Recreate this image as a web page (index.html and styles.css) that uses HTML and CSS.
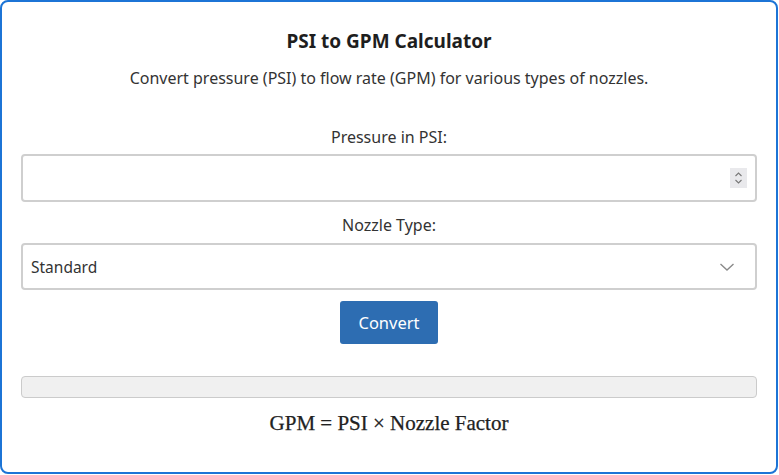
FILE: index.html
```html
<!DOCTYPE html>
<html>
<head>
<meta charset="utf-8">
<link rel="stylesheet" href="styles.css">
</head>
<body>
<div class="card">
  <h1 class="title">PSI to GPM Calculator</h1>
  <p class="desc">Convert pressure (PSI) to flow rate (GPM) for various types of nozzles.</p>
  <div class="label label-psi">Pressure in PSI:</div>
  <div class="field field-input">
    <span class="field-text"></span>
    <span class="spinner">
      <svg width="17" height="20" viewBox="0 0 17 20"><path d="M5.5 8 L8.5 5 L11.5 8" fill="none" stroke="#777" stroke-width="1.1"/><path d="M5.5 12 L8.5 15 L11.5 12" fill="none" stroke="#777" stroke-width="1.1"/></svg>
    </span>
  </div>
  <div class="label label-nozzle">Nozzle Type:</div>
  <div class="field field-select">
    <span class="field-text">Standard</span>
    <svg class="chevron" width="16" height="10" viewBox="0 0 16 10"><path d="M1.5 2 L8 8 L14.5 2" fill="none" stroke="#8a8a8a" stroke-width="1.4"/></svg>
  </div>
  <div class="actions"><button class="btn">Convert</button></div>
  <div class="result"></div>
  <div class="formula">GPM = PSI × Nozzle Factor</div>
</div>
</body>
</html>
```
FILE: styles.css
```css
html, body { margin: 0; padding: 0; background: #fff; }
.card {
  box-sizing: border-box;
  width: 778px;
  height: 474px;
  border: 2px solid #1c74d6;
  border-radius: 8px;
  padding: 0 19px;
  font-family: "Noto Sans", "Open Sans", sans-serif;
  color: #222;
  text-align: center;
}
.title {
  margin: 27px 0 0;
  font-size: 19px;
  line-height: 24px;
  font-weight: 700;
  color: #1e1e1e;
}
.desc {
  margin: 14px 0 0;
  font-size: 16px;
  line-height: 22px;
  color: #333;
}
.label {
  font-size: 16px;
  line-height: 22px;
  color: #333;
}
.label-psi { margin-top: 37px; }
.label-nozzle { margin-top: 12px; }
.field {
  box-sizing: border-box;
  display: flex;
  align-items: center;
  border: 2px solid #cfcfcf;
  border-radius: 4px;
  text-align: left;
  background: #fff;
}
.field-input { margin-top: 6px; height: 48px; padding: 0 8px 0 9px; }
.field-select { margin-top: 7px; height: 47px; padding: 0 20px 0 8px; }
.field-text { flex: 1; font-size: 15.5px; color: #333; }
.spinner {
  width: 17px;
  height: 20px;
  background: #e9e9ec;
  display: flex;
}
.chevron { display: block; }
.actions { margin-top: 11px; display: flex; justify-content: center; }
.btn {
  width: 98px;
  height: 43px;
  border: none;
  border-radius: 3px;
  background: #2d6db2;
  color: #fff;
  font-family: "Noto Sans", sans-serif;
  font-size: 16.5px;
  padding: 0;
}
.result {
  margin-top: 32px;
  box-sizing: border-box;
  height: 22px;
  background: #f0f0f0;
  border: 1px solid #cbcbcb;
  border-radius: 4px;
}
.formula {
  margin-top: 13px;
  font-family: "Liberation Serif", serif;
  font-size: 21px;
  line-height: 24px;
  color: #222;
  -webkit-text-stroke: 0.25px #222;
}
```
